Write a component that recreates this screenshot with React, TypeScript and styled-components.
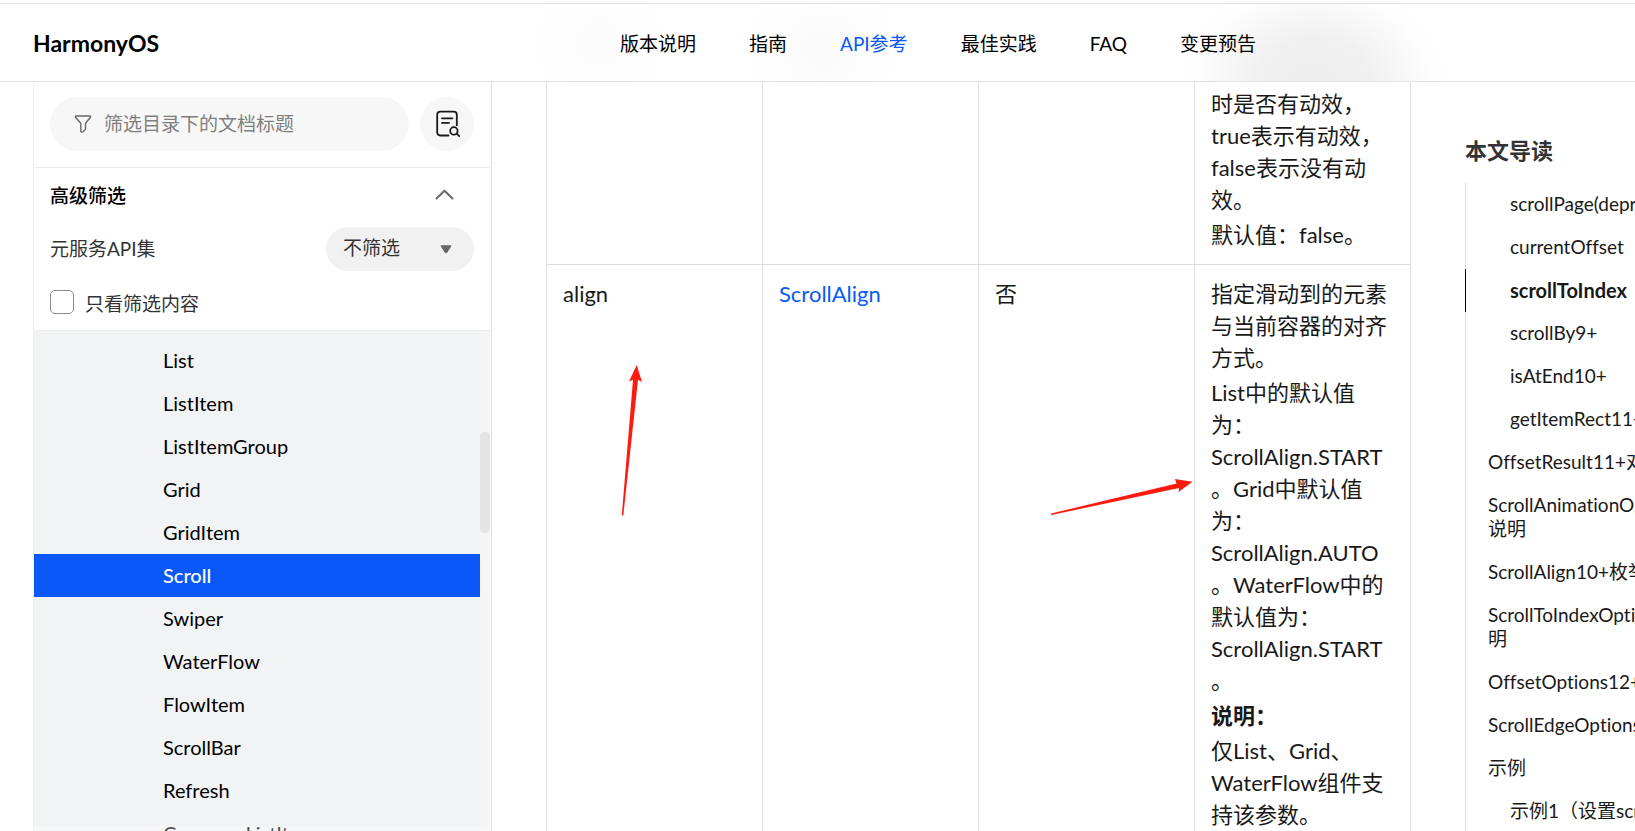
import React from "react";
import styled, { createGlobalStyle } from "styled-components";

const ink = "#191919";
const blue = "#0a59f7";
const rule = "#dddddd";
const softRule = "#ededed";

const GlobalStyle = createGlobalStyle`
  *, *::before, *::after { box-sizing: border-box; }
  body {
    margin: 0;
    background: #fff;
    color: ${ink};
    font-family: Lato, "Noto Sans CJK SC", sans-serif;
    font-size: 19px;
    font-variant-ligatures: none;
  }
  a { color: inherit; text-decoration: none; }
  ul, p, h2 { margin: 0; padding: 0; }
  ul { list-style: none; }
  button, input, select { font: inherit; color: inherit; }
`;

const Page = styled.div`
  display: flex;
  flex-direction: column;
  height: 100vh;
  padding-top: 3px;
  overflow: hidden;
`;

const Header = styled.header`
  display: flex;
  align-items: center;
  flex: none;
  height: 79px;
  padding-left: 33px;
  border-top: 1px solid #e2e2e2;
  border-bottom: 1px solid #e2e2e2;
  background:
    radial-gradient(ellipse 136px 104px at 1313px 100%, #eeeeee, #f0f0f0 40%, #f8f8f8 68%, #fdfdfd 86%, transparent),
    radial-gradient(circle 70px at 600px 50%, #fbfbfb, transparent),
    radial-gradient(circle 80px at 822px 60%, #fafafa, transparent),
    #fff;
`;

const Brand = styled.a`
  flex: 0 0 587px;
  color: #000;
  font-size: 23px;
  font-weight: 700;
  line-height: 32px;
`;

const Nav = styled.nav`
  display: flex;
  gap: 53px;
  padding-top: 2px;
  white-space: nowrap;
`;

const NavLink = styled.a<{ $current?: boolean }>`
  color: ${({ $current }) => ($current ? blue : "#000")};
  line-height: 32px;
`;

const Body = styled.div`
  display: flex;
  flex: 1;
  min-height: 0;
`;

const Sidebar = styled.aside`
  display: flex;
  flex-direction: column;
  flex: 0 0 459px;
  margin-left: 33px;
  padding-right: 1px;
  border-left: 1px solid #f0f0f0;
  border-right: 1px solid ${rule};
`;

const SearchRow = styled.div`
  display: flex;
  gap: 11px;
  padding: 15px 16px 16px;
  border-bottom: 1px solid ${softRule};
`;

const SearchBox = styled.label`
  display: flex;
  align-items: center;
  gap: 12px;
  flex: 1;
  height: 54px;
  padding: 0 24px;
  border-radius: 27px;
  background: #f7f7f7;
`;

const SearchInput = styled.input`
  flex: 1;
  min-width: 0;
  padding: 0;
  border: 0;
  outline: 0;
  background: none;
  line-height: 32px;
  &::placeholder { color: #7f7f7f; opacity: 1; }
`;

const RoundButton = styled.button`
  display: grid;
  place-items: center;
  width: 54px;
  height: 54px;
  padding: 0;
  border: 0;
  border-radius: 50%;
  background: #f7f7f7;
`;

const Filters = styled.section`
  display: flex;
  flex-direction: column;
  padding: 0 16px 4px;
  border-bottom: 1px solid ${softRule};
`;

const FilterToggle = styled.button`
  display: flex;
  align-items: center;
  justify-content: space-between;
  height: 52px;
  padding: 0 20px 0 0;
  border: 0;
  background: none;
  color: #000;
  font-weight: 500;
`;

const FilterRow = styled.div`
  display: flex;
  align-items: center;
  justify-content: space-between;
  height: 58px;
  color: #333;
`;

const FilterLabel = styled.label`
  padding-bottom: 4px;
`;

const SelectWrap = styled.div`
  display: grid;
  align-items: center;
  width: 148px;
  > * { grid-area: 1 / 1; }
  > svg { justify-self: end; margin-right: 22px; pointer-events: none; }
`;

const Select = styled.select`
  appearance: none;
  width: 100%;
  height: 44px;
  padding: 0 17px 3px;
  border: 0;
  border-radius: 22px;
  background: #f1f1f1;
`;

const CheckLabel = styled.label`
  display: flex;
  align-items: center;
  gap: 11px;
  height: 48px;
  color: #333;
`;

const Checkbox = styled.input`
  appearance: none;
  width: 24px;
  height: 24px;
  margin: 0;
  border: 1px solid #8c8c8c;
  border-radius: 5px;
  background: #fff;
`;

const TreePane = styled.div`
  position: relative;
  display: flex;
  flex: 1;
  min-height: 0;
  overflow: hidden;
  background: #f1f3f5;
`;

const Tree = styled.ul`
  flex: 1;
  padding-top: 8px;
`;

const TreeLink = styled.a<{ $current?: boolean }>`
  display: block;
  height: 43px;
  padding-left: 129px;
  background: ${({ $current }) => ($current ? blue : "transparent")};
  color: ${({ $current }) => ($current ? "#fff" : "#000")};
  font-size: 20px;
  font-weight: ${({ $current }) => ($current ? 500 : 400)};
  line-height: 43px;
`;

const TreeFade = styled.div`
  position: absolute;
  inset: auto 0 0 0;
  height: 5px;
  background: rgba(255, 255, 255, 0.3);
`;

const ScrollTrack = styled.div`
  flex: 0 0 10px;
  padding-top: 101px;
  background: #f5f5f5;
`;

const ScrollThumb = styled.div`
  height: 101px;
  border-radius: 5px;
  background: #e4e4e4;
`;

const Article = styled.main`
  flex: 1;
  min-width: 0;
  margin: 0 54px;
  overflow: hidden;
`;

const ParamTable = styled.table`
  width: 100%;
  table-layout: fixed;
  border-collapse: collapse;
  font-size: 22px;
  line-height: 32px;
`;

const Cell = styled.td<{ $cut?: boolean }>`
  position: relative;
  padding: ${({ $cut }) => ($cut ? "6px 16px 13px" : "13px 16px")};
  border: 1px solid ${rule};
  border-top-width: ${({ $cut }) => ($cut ? 0 : 1)}px;
  vertical-align: top;
  overflow-wrap: break-word;
`;

const Para = styled.p`
  & + & { margin-top: 3px; }
`;

const TypeLink = styled.a`
  color: ${blue};
`;

const UpArrow = styled.svg`
  position: absolute;
  left: 73px;
  top: 97px;
`;

const SideArrow = styled.svg`
  position: absolute;
  left: 69px;
  top: 211px;
`;

const Toc = styled.aside`
  flex: 0 0 170px;
  min-width: 0;
  padding-top: 53px;
  white-space: pre;
`;

const TocTitle = styled.h2`
  padding-bottom: 16px;
  color: #333;
  font-size: 22px;
  font-weight: 700;
  line-height: 32px;
`;

const TocLink = styled.a<{ $level: number; $current?: boolean }>`
  display: block;
  padding: 9px 0 10px ${({ $level }) => ($level === 2 ? 44 : 22)}px;
  border-left: 1px solid ${({ $current }) => ($current ? "#000" : rule)};
  font-size: ${({ $current }) => ($current ? 20 : 19)}px;
  font-weight: ${({ $current }) => ($current ? 700 : 400)};
  line-height: 24px;
`;

const nav = ["版本说明", "指南", "API参考", "最佳实践", "FAQ", "变更预告"];

const tree = [
  "List", "ListItem", "ListItemGroup", "Grid", "GridItem", "Scroll",
  "Swiper", "WaterFlow", "FlowItem", "ScrollBar", "Refresh", "ComposeListItem",
];

const toc: { text: string; level: number }[] = [
  { text: "scrollPage(deprecated)", level: 2 },
  { text: "currentOffset", level: 2 },
  { text: "scrollToIndex", level: 2 },
  { text: "scrollBy9+", level: 2 },
  { text: "isAtEnd10+", level: 2 },
  { text: "getItemRect11+", level: 2 },
  { text: "OffsetResult11+对象说明", level: 1 },
  { text: "ScrollAnimationOptions12+对象\n说明", level: 1 },
  { text: "ScrollAlign10+枚举说明", level: 1 },
  { text: "ScrollToIndexOptions12+对象说\n明", level: 1 },
  { text: "OffsetOptions12+对象说明", level: 1 },
  { text: "ScrollEdgeOptions12+对象说明", level: 1 },
  { text: "示例", level: 1 },
  { text: "示例1（设置scroller控制器）", level: 2 },
];

const FunnelIcon = () => (
  <svg width="18" height="20" viewBox="0 0 18 20" fill="none" stroke="#666" strokeWidth="1.4" strokeLinejoin="round" aria-hidden="true">
    <path d="M2.4 2h13.2c.9 0 1.2.9.7 1.5L11.5 9.2v5.6c0 .4-.1.7-.4 1L9 17.7c-.9.7-2.2.4-2.2-.8V9.2L1.7 3.5C1.2 2.9 1.5 2 2.4 2Z" />
  </svg>
);

const DocSearchIcon = () => (
  <svg width="26" height="28" viewBox="-1 0 26 28" fill="none" stroke="#1a1a1a" strokeWidth="1.8" strokeLinecap="round" aria-hidden="true">
    <path d="M13.5 25.5H5.2a3 3 0 0 1-3-3V4.7a3 3 0 0 1 3-3h13.6a3 3 0 0 1 3 3v10.6" />
    <path d="M7 8.3h10.5M7 12.9h7" />
    <circle cx="18.9" cy="20.9" r="3.7" />
    <path d="m21.7 23.7 2.5 2.5" />
  </svg>
);

const ChevronUp = () => (
  <svg width="19" height="11" viewBox="0 0 19 11" fill="none" stroke="#666" strokeWidth="1.9" strokeLinecap="round" strokeLinejoin="round" aria-hidden="true">
    <path d="M1.5 9.5 9.5 1.7l8 7.8" />
  </svg>
);

const Caret = () => (
  <svg width="12" height="9" viewBox="0 0 12 9" fill="#666" stroke="#666" strokeLinejoin="round" aria-hidden="true">
    <path d="M1 .8h10L6.7 7.700H5.300Z" />
  </svg>
);

export default function App() {
  return (
    <>
      <GlobalStyle />
      <Page>
        <Header>
          <Brand href="#home">HarmonyOS</Brand>
          <Nav>
            {nav.map((item) => (
              <NavLink key={item} href={`#${item}`} $current={item === "API参考"}>{item}</NavLink>
            ))}
          </Nav>
        </Header>
        <Body>
          <Sidebar>
            <SearchRow>
              <SearchBox>
                <FunnelIcon />
                <SearchInput type="text" placeholder="筛选目录下的文档标题" aria-label="筛选目录下的文档标题" />
              </SearchBox>
              <RoundButton type="button" aria-label="搜索文档">
                <DocSearchIcon />
              </RoundButton>
            </SearchRow>
            <Filters>
              <FilterToggle type="button" aria-expanded="true">
                高级筛选
                <ChevronUp />
              </FilterToggle>
              <FilterRow>
                <FilterLabel htmlFor="api-set">元服务API集</FilterLabel>
                <SelectWrap>
                  <Select id="api-set" defaultValue="none">
                    <option value="none">不筛选</option>
                  </Select>
                  <Caret />
                </SelectWrap>
              </FilterRow>
              <CheckLabel>
                <Checkbox type="checkbox" />
                只看筛选内容
              </CheckLabel>
            </Filters>
            <TreePane>
              <Tree>
                {tree.map((item) => (
                  <li key={item}>
                    <TreeLink href={`#${item}`} $current={item === "Scroll"}>{item}</TreeLink>
                  </li>
                ))}
              </Tree>
              <ScrollTrack>
                <ScrollThumb />
              </ScrollTrack>
              <TreeFade />
            </TreePane>
          </Sidebar>
          <Article>
            <ParamTable>
              <tbody>
                <tr>
                  <Cell $cut />
                  <Cell $cut />
                  <Cell $cut />
                  <Cell $cut>
                    <Para>时是否有动效，true表示有动效，false表示没有动效。</Para>
                    <Para>默认值：false。</Para>
                  </Cell>
                </tr>
                <tr>
                  <Cell>
                    align
                    <UpArrow width="25" height="156" viewBox="0 0 25 156" fill="#ff1a10" aria-hidden="true">
                      <path d="M16.7 3 22 20l-4-2.200L3.300 153.500l-1.500-.2L13 17.800 9 19.500Z" />
                    </UpArrow>
                  </Cell>
                  <Cell><TypeLink href="#ScrollAlign">ScrollAlign</TypeLink></Cell>
                  <Cell>
                    否
                    <SideArrow width="148" height="42" viewBox="0 0 148 42" fill="#ff1a10" aria-hidden="true">
                      <path d="M144.500 5.800 130.500 16l.5-4L3.300 39l-.3-1.500L128.500 7.500 127 3Z" />
                    </SideArrow>
                  </Cell>
                  <Cell>
                    <Para>指定滑动到的元素与当前容器的对齐方式。</Para>
                    <Para>List中的默认值为：ScrollAlign.START。Grid中默认值为：ScrollAlign.AUTO。WaterFlow中的默认值为：ScrollAlign.START。</Para>
                    <Para><strong>说明：</strong></Para>
                    <Para>仅List、Grid、WaterFlow组件支持该参数。</Para>
                  </Cell>
                </tr>
              </tbody>
            </ParamTable>
          </Article>
          <Toc>
            <TocTitle>本文导读</TocTitle>
            <ul>
              {toc.map(({ text, level }) => (
                <li key={text}>
                  <TocLink href={`#${text}`} $level={level} $current={text === "scrollToIndex"}>{text}</TocLink>
                </li>
              ))}
            </ul>
          </Toc>
        </Body>
      </Page>
    </>
  );
}
